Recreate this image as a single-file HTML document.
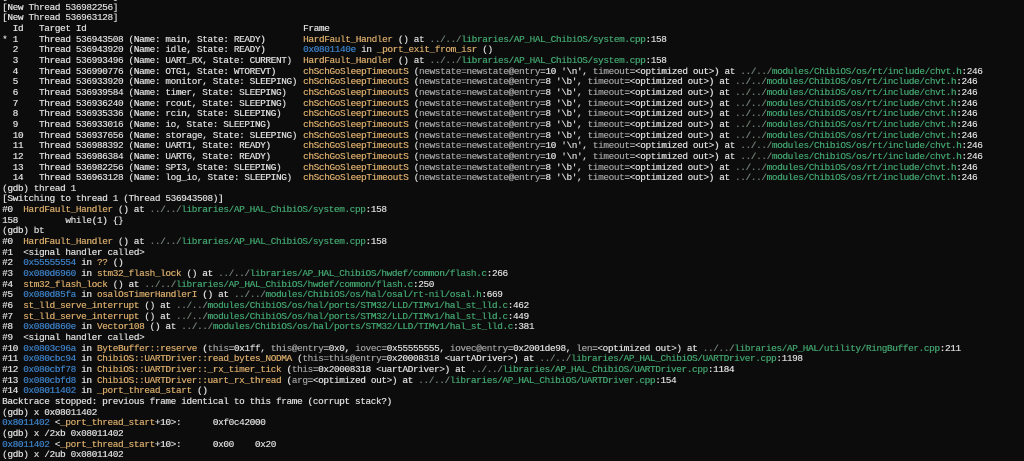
<!DOCTYPE html>
<html><head><meta charset="utf-8"><style>
html,body{margin:0;padding:0;background:#0c0c0c;}
body{width:1024px;height:461px;overflow:hidden;position:relative;}
#t{position:absolute;left:2px;top:-8px;font-family:"Liberation Mono",monospace;font-size:9.4px;letter-spacing:-0.36px;line-height:10.65px;color:#d6d6d6;white-space:pre;text-shadow:0.3px 0 0 currentColor;}
.o{color:#cfa466}.b{color:#3a7cc0}.g{color:#3f9e6a}.d{color:#6f7d72}.p{color:#9a9a9a}
.c{display:inline-block;width:301px}
</style></head><body><div id="t"><div>[New Thread 536982000]</div><div>[New Thread 536982256]</div><div>[New Thread 536963128]</div><div><span class="c">  Id   Target Id</span>Frame</div><div><span class="c">* 1    Thread 536943508 (Name: main, State: READY)</span><span class="o">HardFault_Handler</span> () at <span class="d">../../</span><span class="g">libraries/AP_HAL_ChibiOS/system.cpp</span>:158</div><div><span class="c">  2    Thread 536943920 (Name: idle, State: READY)</span><span class="b">0x0801140e</span> in <span class="o">_port_exit_from_isr</span> ()</div><div><span class="c">  3    Thread 536993496 (Name: UART_RX, State: CURRENT)</span><span class="o">HardFault_Handler</span> () at <span class="d">../../</span><span class="g">libraries/AP_HAL_ChibiOS/system.cpp</span>:158</div><div><span class="c">  4    Thread 536990776 (Name: OTG1, State: WTOREVT)</span><span class="o">chSchGoSleepTimeoutS</span> (<span class="p">newstate=newstate@entry</span>=10 '\n', <span class="p">timeout</span>=&lt;optimized out&gt;) at <span class="d">../../</span><span class="g">modules/ChibiOS/os/rt/include/chvt.h</span>:246</div><div><span class="c">  5    Thread 536933920 (Name: monitor, State: SLEEPING)</span><span class="o">chSchGoSleepTimeoutS</span> (<span class="p">newstate=newstate@entry</span>=8 '\b', <span class="p">timeout</span>=&lt;optimized out&gt;) at <span class="d">../../</span><span class="g">modules/ChibiOS/os/rt/include/chvt.h</span>:246</div><div><span class="c">  6    Thread 536939584 (Name: timer, State: SLEEPING)</span><span class="o">chSchGoSleepTimeoutS</span> (<span class="p">newstate=newstate@entry</span>=8 '\b', <span class="p">timeout</span>=&lt;optimized out&gt;) at <span class="d">../../</span><span class="g">modules/ChibiOS/os/rt/include/chvt.h</span>:246</div><div><span class="c">  7    Thread 536936240 (Name: rcout, State: SLEEPING)</span><span class="o">chSchGoSleepTimeoutS</span> (<span class="p">newstate=newstate@entry</span>=8 '\b', <span class="p">timeout</span>=&lt;optimized out&gt;) at <span class="d">../../</span><span class="g">modules/ChibiOS/os/rt/include/chvt.h</span>:246</div><div><span class="c">  8    Thread 536935336 (Name: rcin, State: SLEEPING)</span><span class="o">chSchGoSleepTimeoutS</span> (<span class="p">newstate=newstate@entry</span>=8 '\b', <span class="p">timeout</span>=&lt;optimized out&gt;) at <span class="d">../../</span><span class="g">modules/ChibiOS/os/rt/include/chvt.h</span>:246</div><div><span class="c">  9    Thread 536933016 (Name: io, State: SLEEPING)</span><span class="o">chSchGoSleepTimeoutS</span> (<span class="p">newstate=newstate@entry</span>=8 '\b', <span class="p">timeout</span>=&lt;optimized out&gt;) at <span class="d">../../</span><span class="g">modules/ChibiOS/os/rt/include/chvt.h</span>:246</div><div><span class="c">  10   Thread 536937656 (Name: storage, State: SLEEPING)</span><span class="o">chSchGoSleepTimeoutS</span> (<span class="p">newstate=newstate@entry</span>=8 '\b', <span class="p">timeout</span>=&lt;optimized out&gt;) at <span class="d">../../</span><span class="g">modules/ChibiOS/os/rt/include/chvt.h</span>:246</div><div><span class="c">  11   Thread 536988392 (Name: UART1, State: READY)</span><span class="o">chSchGoSleepTimeoutS</span> (<span class="p">newstate=newstate@entry</span>=10 '\n', <span class="p">timeout</span>=&lt;optimized out&gt;) at <span class="d">../../</span><span class="g">modules/ChibiOS/os/rt/include/chvt.h</span>:246</div><div><span class="c">  12   Thread 536986384 (Name: UART6, State: READY)</span><span class="o">chSchGoSleepTimeoutS</span> (<span class="p">newstate=newstate@entry</span>=10 '\n', <span class="p">timeout</span>=&lt;optimized out&gt;) at <span class="d">../../</span><span class="g">modules/ChibiOS/os/rt/include/chvt.h</span>:246</div><div><span class="c">  13   Thread 536982256 (Name: SPI3, State: SLEEPING)</span><span class="o">chSchGoSleepTimeoutS</span> (<span class="p">newstate=newstate@entry</span>=8 '\b', <span class="p">timeout</span>=&lt;optimized out&gt;) at <span class="d">../../</span><span class="g">modules/ChibiOS/os/rt/include/chvt.h</span>:246</div><div><span class="c">  14   Thread 536963128 (Name: log_io, State: SLEEPING)</span><span class="o">chSchGoSleepTimeoutS</span> (<span class="p">newstate=newstate@entry</span>=8 '\b', <span class="p">timeout</span>=&lt;optimized out&gt;) at <span class="d">../../</span><span class="g">modules/ChibiOS/os/rt/include/chvt.h</span>:246</div><div>(gdb) thread 1</div><div>[Switching to thread 1 (Thread 536943508)]</div><div>#0  <span class="o">HardFault_Handler</span> () at <span class="d">../../</span><span class="g">libraries/AP_HAL_ChibiOS/system.cpp</span>:158</div><div>158         while(1) {}</div><div>(gdb) bt</div><div>#0  <span class="o">HardFault_Handler</span> () at <span class="d">../../</span><span class="g">libraries/AP_HAL_ChibiOS/system.cpp</span>:158</div><div>#1  &lt;signal handler called&gt;</div><div>#2  <span class="b">0x55555554</span> in <span class="o">??</span> ()</div><div>#3  <span class="b">0x080d6960</span> in <span class="o">stm32_flash_lock</span> () at <span class="d">../../</span><span class="g">libraries/AP_HAL_ChibiOS/hwdef/common/flash.c</span>:266</div><div>#4  <span class="o">stm32_flash_lock</span> () at <span class="d">../../</span><span class="g">libraries/AP_HAL_ChibiOS/hwdef/common/flash.c</span>:250</div><div>#5  <span class="b">0x080d85fa</span> in <span class="o">osalOsTimerHandlerI</span> () at <span class="d">../../</span><span class="g">modules/ChibiOS/os/hal/osal/rt-nil/osal.h</span>:669</div><div>#6  <span class="o">st_lld_serve_interrupt</span> () at <span class="d">../../</span><span class="g">modules/ChibiOS/os/hal/ports/STM32/LLD/TIMv1/hal_st_lld.c</span>:462</div><div>#7  <span class="o">st_lld_serve_interrupt</span> () at <span class="d">../../</span><span class="g">modules/ChibiOS/os/hal/ports/STM32/LLD/TIMv1/hal_st_lld.c</span>:449</div><div>#8  <span class="b">0x080d860e</span> in <span class="o">Vector108</span> () at <span class="d">../../</span><span class="g">modules/ChibiOS/os/hal/ports/STM32/LLD/TIMv1/hal_st_lld.c</span>:381</div><div>#9  &lt;signal handler called&gt;</div><div>#10 <span class="b">0x0803c96a</span> in <span class="o">ByteBuffer::reserve</span> (<span class="p">this</span>=0x1ff, <span class="p">this@entry</span>=0x0, <span class="p">iovec</span>=0x55555555, <span class="p">iovec@entry</span>=0x2001de98, <span class="p">len</span>=&lt;optimized out&gt;) at <span class="d">../../</span><span class="g">libraries/AP_HAL/utility/RingBuffer.cpp</span>:211</div><div>#11 <span class="b">0x080cbc94</span> in <span class="o">ChibiOS::UARTDriver::read_bytes_NODMA</span> (<span class="p">this=this@entry</span>=0x20008318 &lt;uartADriver&gt;) at <span class="d">../../</span><span class="g">libraries/AP_HAL_ChibiOS/UARTDriver.cpp</span>:1198</div><div>#12 <span class="b">0x080cbf78</span> in <span class="o">ChibiOS::UARTDriver::_rx_timer_tick</span> (<span class="p">this</span>=0x20008318 &lt;uartADriver&gt;) at <span class="d">../../</span><span class="g">libraries/AP_HAL_ChibiOS/UARTDriver.cpp</span>:1184</div><div>#13 <span class="b">0x080cbfd8</span> in <span class="o">ChibiOS::UARTDriver::uart_rx_thread</span> (<span class="p">arg</span>=&lt;optimized out&gt;) at <span class="d">../../</span><span class="g">libraries/AP_HAL_ChibiOS/UARTDriver.cpp</span>:154</div><div>#14 <span class="b">0x08011402</span> in <span class="o">_port_thread_start</span> ()</div><div>Backtrace stopped: previous frame identical to this frame (corrupt stack?)</div><div>(gdb) x 0x08011402</div><div><span class="b">0x8011402</span> &lt;<span class="o">_port_thread_start</span>+10&gt;:      0xf0c42000</div><div>(gdb) x /2xb 0x08011402</div><div><span class="b">0x8011402</span> &lt;<span class="o">_port_thread_start</span>+10&gt;:      0x00    0x20</div><div>(gdb) x /2ub 0x08011402</div></div></body></html>
